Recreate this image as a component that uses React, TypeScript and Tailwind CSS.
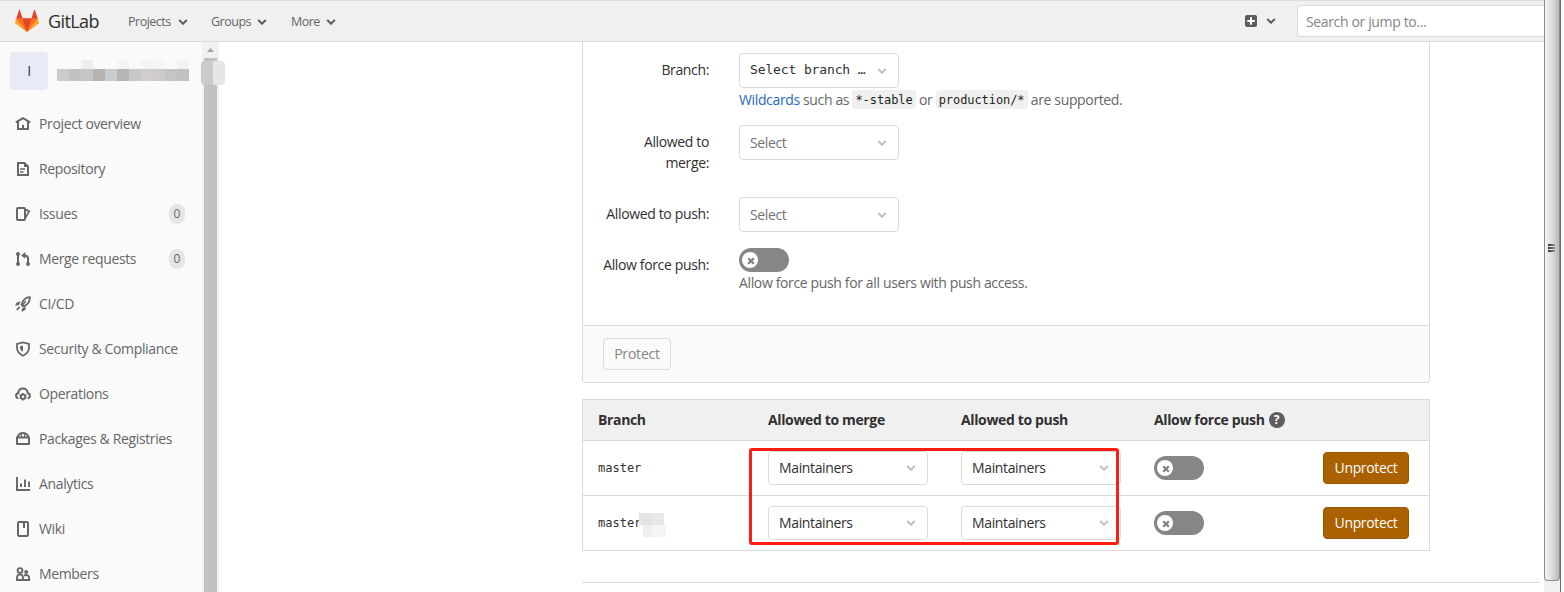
import type { ReactNode } from "react";
import clsx from "clsx";

type NavItem = { label: string; icon: ReactNode; count?: number };

const CENSOR_TOP = ["#fafafa", "#fafafa", "#eeeeee", "#fafafa", "#fafafa", "#f5f5f5", "#fafafa", "#f4f4f4", "#f6f6f6", "#fafafa", "#f3f3f3"];
const CENSOR_BOTTOM = ["#cbcbcb", "#c2c2c2", "#c8c5c9", "#b7b3b0", "#cacbce", "#b8b4b5", "#c8c8cb", "#d1cdce", "#cccacb", "#c5c5c8", "#c1c1c3"];

const NAV: NavItem[] = [
  {
    label: "Project overview",
    icon: (
      <>
        <path d="M.8 6.3 8 2.1l7.2 4.2" />
        <path d="M3 5.8V13h10V5.8" />
        <path d="M8 13.5V9" />
      </>
    ),
  },
  {
    label: "Repository",
    icon: (
      <>
        <path d="M3 2h6.5L13 5.5V14H3z" />
        <path d="M5 8h5M5 11h3.5" strokeWidth="1.5" />
        <path d="M9 1.5V6h4.5z" fill="currentColor" stroke="none" />
      </>
    ),
  },
  {
    label: "Issues",
    count: 0,
    icon: (
      <>
        <rect x="2" y="2" width="8" height="12" rx="1" />
        <path d="m10.5 3.6 3.7 1.6-3.7 6.6" strokeWidth="1.7" />
      </>
    ),
  },
  {
    label: "Merge requests",
    count: 0,
    icon: (
      <>
        <path d="M3 3v10M13 13V7.5C13 5.5 12 4.4 9.5 4.4" />
        <circle cx="3" cy="3" r="2" fill="currentColor" stroke="none" />
        <circle cx="3" cy="13" r="2" fill="currentColor" stroke="none" />
        <circle cx="13" cy="13" r="2" fill="currentColor" stroke="none" />
        <path d="M10.3 1v6.8L6.2 4.4z" fill="currentColor" stroke="none" />
      </>
    ),
  },
  {
    label: "CI/CD",
    icon: (
      <>
        <path d="M14.8 1.2c-4.5.2-7 3-8.3 7.5l1.7 1.7c4-1.5 6.800-4.400 6.600-9.200z" strokeWidth="1.8" />
        <path d="m7.5 9 3.3-4" strokeWidth="1.4" />
        <path d="M5.6 5.2 1.8 6.6 0 9.8l4-.9zM11 10.6l-.8 3.4L6.7 16l.2-3.5z" fill="currentColor" stroke="none" />
        <path d="m4.7 10.8-3 3.2" strokeWidth="1.7" />
      </>
    ),
  },
  {
    label: "Security & Compliance",
    icon: (
      <>
        <path d="M8 1.4 14 3v4c0 3.5-2.4 5.8-6 7.7C4.4 12.8 2 10.5 2 7V3z" strokeWidth="1.8" />
        <path d="M8 4.4v6.4C6.2 9.5 5 8.6 5 7V5.2z" fill="currentColor" stroke="none" />
      </>
    ),
  },
  {
    label: "Operations",
    icon: (
      <>
        <path d="M3.3 12.3C.4 11.6.2 7.6 3.3 7.2 3.8 1 12.2 1 12.7 7.2c3.1.4 2.9 4.4 0 5.1" strokeWidth="1.9" />
        <circle cx="8" cy="10.7" r="2.2" strokeWidth="1.8" />
        <path d="M8 7v1.5M8 13v1.6M4.7 8.9l1.4.8M9.9 11.7l1.5.8M4.7 12.5l1.4-.8M9.9 9.7l1.5-.8" strokeWidth="1.5" />
      </>
    ),
  },
  {
    label: "Packages & Registries",
    icon: (
      <>
        <path d="M2 6.5h12V13H2z" strokeLinejoin="round" />
        <path d="M2.5 6C3.5 3 5 2 8 2s4.5 1 5.5 4" strokeWidth="1.8" />
        <path d="M6.3 2.2v4M9.7 2.2v4" strokeWidth="1.3" />
      </>
    ),
  },
  {
    label: "Analytics",
    icon: <path d="M2 1v13h13M6 7.5V11M10 3.5V11M14 5.5V11" strokeWidth="1.9" />,
  },
  {
    label: "Wiki",
    icon: (
      <>
        <rect x="3" y="1" width="10" height="14" rx="1" />
        <path d="M9 1.5V7" />
      </>
    ),
  },
  {
    label: "Members",
    icon: (
      <>
        <circle cx="5" cy="4.5" r="2.4" strokeWidth="1.9" />
        <path d="M2 14v-2c0-2.6 1.2-3.6 3-3.6S8 9.4 8 12v2z" strokeWidth="1.9" />
        <circle cx="11.2" cy="6" r="2" fill="currentColor" stroke="none" />
        <path d="M9 9.5c3-1.2 5.2 0 5.2 2.7V14H8" strokeWidth="1.9" />
      </>
    ),
  },
];

function Chevron({ className }: { className?: string }) {
  return (
    <svg viewBox="0 0 10 6" className={clsx("h-1.5 w-2.5 shrink-0", className)} fill="none" stroke="currentColor" strokeWidth="2">
      <path d="m1.2 1 3.8 3.7L8.8 1" />
    </svg>
  );
}

function Tanuki() {
  return (
    <svg viewBox="0 0 36 36" className="size-6">
      <path fill="#e24329" d="m2 14 9.38 9v-9l-4-12.28c-.205-.632-1.176-.632-1.38 0z" />
      <path fill="#e24329" d="m34 14-9.38 9v-9l4-12.28c.205-.632 1.176-.632 1.38 0z" />
      <path fill="#e24329" d="M18 34.38 3 14h30z" />
      <path fill="#fc6d26" d="M18 34.38 11.38 14H2l4 11z" />
      <path fill="#fc6d26" d="M18 34.38 24.62 14H34l-4 11z" />
      <path fill="#fca326" d="M2 14 .1 20.16c-.18.565 0 1.2.5 1.56l17.42 12.66z" />
      <path fill="#fca326" d="m34 14 1.9 6.16c.18.565 0 1.2-.5 1.56L18 34.38z" />
    </svg>
  );
}

function TopMenu({ label, className }: { label: string; className: string }) {
  return (
    <div className={clsx("flex items-center justify-between pt-px text-[12.5px] font-medium tracking-[-0.5px] text-[#666]", className)}>
      <span>{label}</span>
      <Chevron className="text-[#5c5c5c]" />
    </div>
  );
}

function Select({ children, className }: { children: ReactNode; className?: string }) {
  return (
    <div className={clsx("flex w-40 items-center justify-between rounded border border-[#dbdbdb] bg-white pr-[11px] pl-2.5", className)}>
      <span>{children}</span>
      <Chevron className="text-[#bfbfbf]" />
    </div>
  );
}

function Toggle() {
  return (
    <div className="flex h-6 w-[50px] items-center rounded-full bg-[#868686] pl-[3px]">
      <div className="flex size-4 items-center justify-center rounded-full bg-white">
        <svg viewBox="0 0 8 8" className="mt-px ml-0.5 size-2" stroke="#808080" strokeWidth="2.2">
          <path d="m1.2 1.2 5.6 5.6M6.8 1.2 1.2 6.8" />
        </svg>
      </div>
    </div>
  );
}

function Code({ children }: { children: ReactNode }) {
  return (
    <code className="h-[19px] rounded bg-[#f0f0f0] px-[3px] pt-px font-['DejaVu_Sans_Mono',monospace] text-[12px] leading-[19px] tracking-[-0.07px] text-[#1f1f1f]">
      {children}
    </code>
  );
}

function Header() {
  return (
    <header className="flex h-[42px] shrink-0 items-center border-y border-[#dbdbdb] bg-[#f0f0f0] pl-[15px]">
      <Tanuki />
      <span className="ml-[9px] w-[80px] pt-px text-[18px] font-medium tracking-[-0.6px] text-[#2e2e2e]">GitLab</span>
      <TopMenu label="Projects" className="w-[60px]" />
      <TopMenu label="Groups" className="ml-[23px] w-14" />
      <TopMenu label="More" className="ml-6 w-[45px]" />
      <div className="ml-auto flex items-center gap-[9px] text-[#5c5c5c]">
        <svg viewBox="0 0 12 12" className="size-3">
          <rect width="12" height="12" rx="2" fill="currentColor" />
          <path d="M6 2.3v7.4M2.3 6h7.4" stroke="#fff" strokeWidth="2" />
        </svg>
        <Chevron />
      </div>
      <div className="ml-[21px] flex h-8 w-[247px] items-center rounded-l border border-r-0 border-[#dbdbdb] bg-white pt-0.5 pl-2 text-sm text-[#868686]">
        Search or jump to...
      </div>
    </header>
  );
}

function Sidebar() {
  return (
    <aside className="flex w-[219px] shrink-0 bg-[#fafafa]">
      <div className="w-[202px]">
        <div className="flex h-[59px] items-start pt-2.5 pl-2.5">
          <div className="flex size-[38px] items-center justify-center rounded bg-[#e8eaf6] text-sm text-[#303030]">I</div>
          <div className="mt-2 ml-[9px]">
            {[CENSOR_TOP, CENSOR_BOTTOM].map((row, r) => (
              <div key={r} className="flex">
                {row.map((color, i) => (
                  <div key={i} className={clsx("w-3", r === 0 ? "h-[9px]" : "h-3")} style={{ background: color }} />
                ))}
              </div>
            ))}
          </div>
        </div>
        <nav>
          {NAV.map((item) => (
            <div key={item.label} className="flex h-[45px] items-center pl-[15px] text-sm text-[#666]">
              <svg viewBox="0 0 16 16" className="mr-2 size-4 shrink-0" fill="none" stroke="currentColor" strokeWidth="2">
                {item.icon}
              </svg>
              <span>{item.label}</span>
              {item.count !== undefined && (
                <span className="mr-[17px] ml-auto flex h-5 w-4 items-center justify-center rounded-full bg-[#e5e5e5] text-xs tracking-normal">{item.count}</span>
              )}
            </div>
          ))}
        </nav>
      </div>
      {/* Sidebar scrollbar */}
      <div className="relative flex w-[17px] flex-col items-center bg-[#f1f1f1]">
        <svg viewBox="0 0 7 4" className="mt-1.5 mb-[6px] h-1 w-[7px] shrink-0" fill="#a3a3a3">
          <path d="M0 4 3.5 0 7 4z" />
        </svg>
        <div className="w-[13px] flex-1 bg-[#c1c1c1]" />
        <div className="absolute top-[19px] -left-px flex h-6 w-6 overflow-hidden rounded-sm">
          <div className="w-3 bg-[#cbcbcb]" />
          <div className="w-3 bg-[#e6e6e6]" />
        </div>
      </div>
    </aside>
  );
}

function FormRow({ label, className, children }: { label: ReactNode; className: string; children: ReactNode }) {
  return (
    <div className={clsx("flex", className)}>
      <div className="mr-[30px] w-[126px] shrink-0 pt-1.5 text-right leading-[21px] text-[#303030]">{label}</div>
      <div>{children}</div>
    </div>
  );
}

function ProtectForm() {
  return (
    <section className="h-[341px] w-[848px] rounded-b border border-t-0 border-[#dbdbdb]">
      <div className="h-[283px] pt-[11px]">
        <FormRow className="h-[72px]" label="Branch:">
          <Select className="h-[35px] font-['DejaVu_Sans_Mono',monospace] text-[13px] tracking-[-0.13px] text-[#303030]">Select branch …</Select>
          <p className="mt-px flex h-[21px] items-center whitespace-pre leading-[21px] text-[#666]">
            <span className="text-[#1f6bc0]">Wildcards</span> such as <Code>*-stable</Code> or <Code>production/*</Code> are supported.
          </p>
        </FormRow>
        <FormRow className="h-[72px]" label={<div className="pl-6">Allowed to merge:</div>}>
          <Select className="h-[35px] text-[#737373]">Select</Select>
        </FormRow>
        <FormRow className="h-[51px]" label="Allowed to push:">
          <Select className="h-[35px] text-[#737373]">Select</Select>
        </FormRow>
        <FormRow className="h-[60px]" label="Allow force push:">
          <Toggle />
          <p className="leading-[22px] text-[#666]">Allow force push for all users with push access.</p>
        </FormRow>
      </div>
      <div className="flex h-[57px] items-center rounded-b border-t border-[#dbdbdb] bg-[#fafafa] pl-5">
        <button className="h-8 w-[68px] rounded border border-[#dbdbdb] tracking-[-0.2px] text-[#868686]">Protect</button>
      </div>
    </section>
  );
}

const COLUMNS = "grid grid-cols-[170px_193px_193px_169px_1fr] items-center pl-[15px]";

function BranchTable() {
  return (
    <section className="relative mt-4 w-[848px] border border-[#dbdbdb]">
      <div className={clsx(COLUMNS, "h-10 bg-[#f0f0f0] font-bold text-[#303030]")}>
        <span>Branch</span>
        <span>Allowed to merge</span>
        <span>Allowed to push</span>
        <span className="flex items-center gap-1 whitespace-nowrap">
          Allow force push
          <span className="flex size-4 items-center justify-center rounded-full bg-[#5e5e5e] text-[12px] leading-4 text-white">?</span>
        </span>
      </div>
      {[false, true].map((censored) => (
        <div key={String(censored)} className={clsx(COLUMNS, "h-[55px] border-t border-[#dbdbdb] text-[#303030]")}>
          <span className="flex h-6 items-center pt-0.5 font-['DejaVu_Sans_Mono',monospace] text-[12px] tracking-normal">
            master
            {censored && (
              <span className="-ml-0.5 mt-0.5 grid grid-cols-[13px_12px]">
                <i className="h-3 bg-[#e3e3e3]" />
                <i className="h-3 bg-[#e7e8e8]" />
                <i className="ml-1 h-3 bg-[#efefef]" />
                <i className="-mr-0.5 h-3 bg-[#f5f5f5]" />
              </span>
            )}
          </span>
          <Select className="h-[34px]">Maintainers</Select>
          <Select className="h-[34px]">Maintainers</Select>
          <Toggle />
          <button className="h-8 w-[86px] rounded border border-[#995700] bg-[#ab6100] text-white">Unprotect</button>
        </div>
      ))}
      {/* Marker frame over both access level columns */}
      <div className="absolute top-12 left-[166px] h-[97px] w-[370px] rounded-[3px] border-3 border-[#ff1d12]" />
    </section>
  );
}

function WindowScrollbar() {
  return (
    <div className="flex w-5 shrink-0 bg-[#f7fbfa]">
      <div className="flex w-4 flex-col bg-[#f0f0f0]">
        <div className="flex h-[581px] items-center rounded-b-sm border border-t-0 border-[#8b8b8b] bg-linear-to-r from-[#f3f3f3] via-[#dcdcde] to-[#b9b9bd] pl-[3px]">
          <div className="-mt-[85px] flex w-[7px] flex-col gap-px">
            <i className="h-0.5 bg-linear-to-r from-[#333] to-[#999]" />
            <i className="h-0.5 bg-linear-to-r from-[#333] to-[#999]" />
            <i className="h-0.5 bg-linear-to-r from-[#333] to-[#999]" />
          </div>
        </div>
      </div>
      <div className="w-px bg-[#666b6e]" />
    </div>
  );
}

export default function App() {
  return (
    <div className="flex h-[592px] w-[1564px] overflow-hidden bg-white font-['Open_Sans',sans-serif] text-sm tracking-[-0.36px]">
      <div className="flex min-w-0 flex-1 flex-col">
        <Header />
        <div className="flex min-h-0 flex-1">
          <Sidebar />
          <main className="flex-1 pl-[363px]">
            <ProtectForm />
            <BranchTable />
            <div className="mt-[31px] mr-1 border-t border-[#dbdbdb]" />
          </main>
        </div>
      </div>
      <WindowScrollbar />
    </div>
  );
}
